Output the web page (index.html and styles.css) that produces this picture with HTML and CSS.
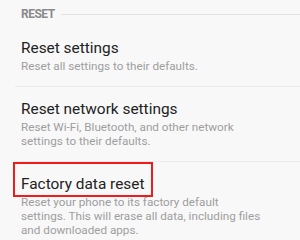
FILE: index.html
```html
<!DOCTYPE html>
<html lang="en">
<head>
  <meta charset="UTF-8" />
  <meta name="viewport" content="width=device-width, initial-scale=1.0"/>
  <title>Reset</title>
  <link rel="stylesheet" href="styles.css">
</head>
<body>

  <div class="section-head">
    <span class="section-title">RESET</span>
    <span class="section-line"></span>
  </div>

  <div class="setting">
    <div class="setting-title">Reset settings</div>
    <div class="setting-desc">Reset all settings to their defaults.</div>
  </div>

  <div class="setting">
    <div class="setting-title">Reset network settings</div>
    <div class="setting-desc">Reset Wi-Fi, Bluetooth, and other network settings to their defaults.</div>
  </div>

  <div class="setting">
    <div class="setting-title"><span class="highlight">Factory data reset</span></div>
    <div class="setting-desc">Reset your phone to its factory default settings. This will erase all data, including files and downloaded apps.</div>
  </div>

</body>
</html>
```

FILE: styles.css
```css
:root {
  --bg-color: #f8f8f8;
  --text-color: #222222;
  --muted-color: #9e9e9e;
  --head-color: #8a8a8a;
  --line-color: #ececec;
  --mark-color: #f21b1b;
}

body {
  margin: 0;
  font-family: Roboto, "Noto Sans", sans-serif;
  background-color: var(--bg-color);
  color: var(--text-color);
  width: 300px;
  height: 240px;
  overflow: hidden;
}

.section-head {
  display: flex;
  align-items: center;
  gap: 6px;
  padding: 7px 0 0 21px;
  height: 19px;
  align-items: flex-start;
}

.section-title {
  font-size: 12px;
  font-weight: bold;
  letter-spacing: -0.5px;
  color: var(--head-color);
  line-height: 15px;
}

.section-line {
  flex-grow: 1;
  height: 1px;
  margin-top: 7px;
  background-color: #e2e2e2;
}

.setting {
  padding: 13px 35px 13px 21px;
}

.setting + .setting {
  margin-left: 15px;
  padding-left: 6px;
  border-top: 1px solid var(--line-color);
}

.setting-title {
  font-size: 15.4px;
  line-height: 19px;
  margin-bottom: 1px;
}

.setting-desc {
  font-size: 11.7px;
  line-height: 14px;
  color: var(--muted-color);
}

/* red box drawn over the title */
.highlight {
  position: relative;
}

.highlight::after {
  content: "";
  position: absolute;
  left: -8px;
  right: -9px;
  top: -13px;
  bottom: -4px;
  border: 2px solid var(--mark-color);
}
```
